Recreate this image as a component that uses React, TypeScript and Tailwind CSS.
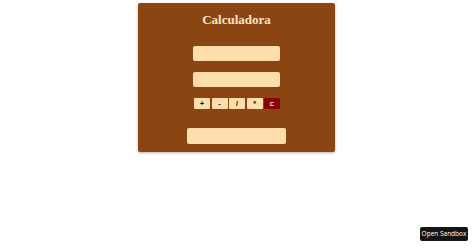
export default function App() {
  const ops = ['+', '-', '/', '*']
  return (
    <div className="relative h-[248px] w-[474px] bg-white">
      <div className="flex pt-[3px] justify-center">
        <div className="ml-[-1px] flex h-[149px] w-[197px] flex-col items-center rounded-[2px] bg-[#8b4513] shadow-[0_1px_3px_rgba(0,0,0,0.3)]">
          <h1 className="mt-[8px] font-['Liberation_Serif',serif] text-[13px] font-bold leading-[17px] text-[#ffe4c4]">
            Calculadora
          </h1>
          <input
            className="mt-[18px] h-[15px] w-[87px] rounded-[2px] bg-[#ffdead] outline-none"
            type="text"
          />
          <input
            className="mt-[11px] h-[15px] w-[87px] rounded-[2px] bg-[#ffdead] outline-none"
            type="text"
          />
          <div className="mt-[11px] flex gap-[1.5px] pl-[1px]">
            {ops.map((op) => (
              <button
                key={op}
                className="flex h-[11px] w-[16px] items-center justify-center rounded-[1px] bg-[#ffdead] font-['Liberation_Sans',sans-serif] text-[7px] font-bold leading-none text-black"
              >
                {op}
              </button>
            ))}
            <button className="flex h-[11px] w-[16px] items-center justify-center rounded-[1px] bg-[#8b0000] font-['Liberation_Sans',sans-serif] text-[6px] font-bold leading-none text-white">
              C
            </button>
          </div>
          <div className="mt-[19px] h-[16px] w-[99px] rounded-[2px] bg-[#ffdead]" />
        </div>
      </div>
      <button className="absolute left-[420px] top-[227px] flex h-[14px] w-[48px] items-center justify-center rounded-[2px] bg-[#151515] font-['Open_Sans',sans-serif] text-[6.5px] leading-none text-white">
        Open Sandbox
      </button>
    </div>
  )
}
